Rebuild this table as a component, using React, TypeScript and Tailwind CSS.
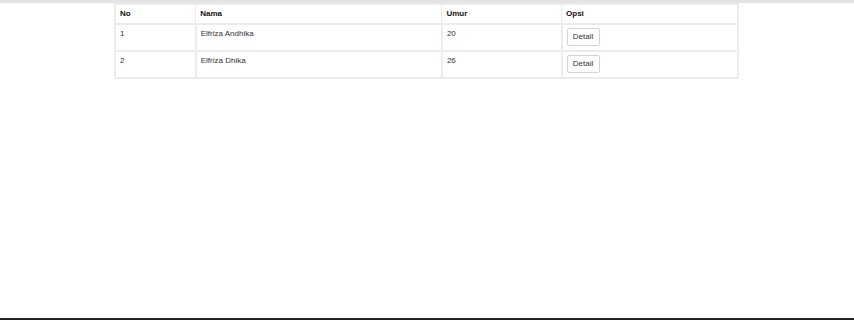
import React from "react";

type Person = { no: number; nama: string; umur: number };

const people: Person[] = [
  { no: 1, nama: "Elfriza Andhika", umur: 20 },
  { no: 2, nama: "Elfriza Dhika", umur: 26 },
];

export default function App() {
  return (
    <div
      className="h-[320px] w-[854px] flex flex-col bg-white text-[#333]"
      style={{ fontFamily: '"Liberation Sans", Arial, sans-serif' }}
    >
      <div className="h-[3px] bg-[#e4e4e8]" />
      <div className="pl-[114px]">
        <table className="w-[625px] border-collapse border-2 border-[#ececec] text-[8px] leading-[10px]">
          <colgroup>
            <col className="w-[81px]" />
            <col className="w-[247px]" />
            <col className="w-[120px]" />
            <col className="w-[177px]" />
          </colgroup>
          <thead>
            <tr className="h-[20px]">
              <th className="border border-[#ececec] px-[4px] text-left font-bold text-[#111]">No</th>
              <th className="border border-[#ececec] px-[4px] text-left font-bold text-[#111]">Nama</th>
              <th className="border border-[#ececec] px-[4px] text-left font-bold text-[#111]">Umur</th>
              <th className="border border-[#ececec] px-[4px] text-left font-bold text-[#111]">Opsi</th>
            </tr>
          </thead>
          <tbody>
            {people.map((p) => (
              <tr key={p.no} className="h-[27px]">
                <td className="border-2 border-[#ececec] px-[4px] pt-[4px] align-top">{p.no}</td>
                <td className="border-2 border-[#ececec] px-[4px] pt-[4px] align-top">{p.nama}</td>
                <td className="border-2 border-[#ececec] px-[4px] pt-[4px] align-top">{p.umur}</td>
                <td className="border-2 border-[#ececec] px-[4px] py-[3px] align-top">
                  <button className="h-[18px] w-[33px] rounded-[2px] border border-[#d4d4d4] bg-white text-[8px] text-[#333]">
                    Detail
                  </button>
                </td>
              </tr>
            ))}
          </tbody>
        </table>
      </div>
      <div className="mt-auto h-[2px] bg-[#222]" />
    </div>
  );
}
